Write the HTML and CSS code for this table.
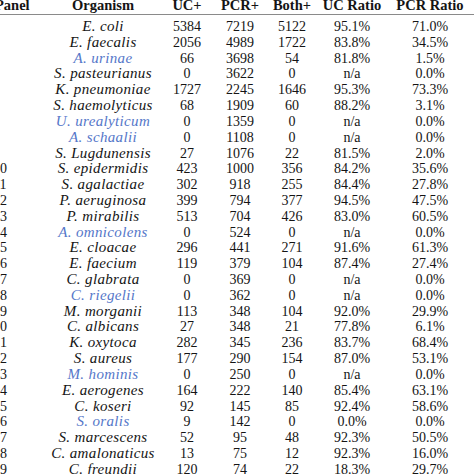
FILE: index.html
```html
<!DOCTYPE html>
<html>
<head>
<meta charset="utf-8">
<link rel="stylesheet" href="styles.css">
</head>
<body>
<div class="table">
  <div class="row head">
    <div class="c panel">Panel</div><div class="c">Organism</div><div class="c">UC+</div><div class="c">PCR+</div><div class="c">Both+</div><div class="c">UC Ratio</div><div class="c">PCR Ratio</div>
  </div>
  <div class="body">
    <div class="row"><div class="c panel">1</div><div class="c org">E. coli</div><div class="c">5384</div><div class="c">7219</div><div class="c">5122</div><div class="c">95.1%</div><div class="c">71.0%</div></div>
    <div class="row"><div class="c panel">2</div><div class="c org">E. faecalis</div><div class="c">2056</div><div class="c">4989</div><div class="c">1722</div><div class="c">83.8%</div><div class="c">34.5%</div></div>
    <div class="row"><div class="c panel">3</div><div class="c org blue">A. urinae</div><div class="c">66</div><div class="c">3698</div><div class="c">54</div><div class="c">81.8%</div><div class="c">1.5%</div></div>
    <div class="row"><div class="c panel">4</div><div class="c org">S. pasteurianus</div><div class="c">0</div><div class="c">3622</div><div class="c">0</div><div class="c">n/a</div><div class="c">0.0%</div></div>
    <div class="row"><div class="c panel">5</div><div class="c org">K. pneumoniae</div><div class="c">1727</div><div class="c">2245</div><div class="c">1646</div><div class="c">95.3%</div><div class="c">73.3%</div></div>
    <div class="row"><div class="c panel">6</div><div class="c org">S. haemolyticus</div><div class="c">68</div><div class="c">1909</div><div class="c">60</div><div class="c">88.2%</div><div class="c">3.1%</div></div>
    <div class="row"><div class="c panel">7</div><div class="c org blue">U. urealyticum</div><div class="c">0</div><div class="c">1359</div><div class="c">0</div><div class="c">n/a</div><div class="c">0.0%</div></div>
    <div class="row"><div class="c panel">8</div><div class="c org blue">A. schaalii</div><div class="c">0</div><div class="c">1108</div><div class="c">0</div><div class="c">n/a</div><div class="c">0.0%</div></div>
    <div class="row"><div class="c panel">9</div><div class="c org">S. Lugdunensis</div><div class="c">27</div><div class="c">1076</div><div class="c">22</div><div class="c">81.5%</div><div class="c">2.0%</div></div>
    <div class="row"><div class="c panel">10</div><div class="c org">S. epidermidis</div><div class="c">423</div><div class="c">1000</div><div class="c">356</div><div class="c">84.2%</div><div class="c">35.6%</div></div>
    <div class="row"><div class="c panel">11</div><div class="c org">S. agalactiae</div><div class="c">302</div><div class="c">918</div><div class="c">255</div><div class="c">84.4%</div><div class="c">27.8%</div></div>
    <div class="row"><div class="c panel">12</div><div class="c org">P. aeruginosa</div><div class="c">399</div><div class="c">794</div><div class="c">377</div><div class="c">94.5%</div><div class="c">47.5%</div></div>
    <div class="row"><div class="c panel">13</div><div class="c org">P. mirabilis</div><div class="c">513</div><div class="c">704</div><div class="c">426</div><div class="c">83.0%</div><div class="c">60.5%</div></div>
    <div class="row"><div class="c panel">14</div><div class="c org blue">A. omnicolens</div><div class="c">0</div><div class="c">524</div><div class="c">0</div><div class="c">n/a</div><div class="c">0.0%</div></div>
    <div class="row"><div class="c panel">15</div><div class="c org">E. cloacae</div><div class="c">296</div><div class="c">441</div><div class="c">271</div><div class="c">91.6%</div><div class="c">61.3%</div></div>
    <div class="row"><div class="c panel">16</div><div class="c org">E. faecium</div><div class="c">119</div><div class="c">379</div><div class="c">104</div><div class="c">87.4%</div><div class="c">27.4%</div></div>
    <div class="row"><div class="c panel">17</div><div class="c org">C. glabrata</div><div class="c">0</div><div class="c">369</div><div class="c">0</div><div class="c">n/a</div><div class="c">0.0%</div></div>
    <div class="row"><div class="c panel">18</div><div class="c org blue">C. riegelii</div><div class="c">0</div><div class="c">362</div><div class="c">0</div><div class="c">n/a</div><div class="c">0.0%</div></div>
    <div class="row"><div class="c panel">19</div><div class="c org">M. morganii</div><div class="c">113</div><div class="c">348</div><div class="c">104</div><div class="c">92.0%</div><div class="c">29.9%</div></div>
    <div class="row"><div class="c panel">20</div><div class="c org">C. albicans</div><div class="c">27</div><div class="c">348</div><div class="c">21</div><div class="c">77.8%</div><div class="c">6.1%</div></div>
    <div class="row"><div class="c panel">21</div><div class="c org">K. oxytoca</div><div class="c">282</div><div class="c">345</div><div class="c">236</div><div class="c">83.7%</div><div class="c">68.4%</div></div>
    <div class="row"><div class="c panel">22</div><div class="c org">S. aureus</div><div class="c">177</div><div class="c">290</div><div class="c">154</div><div class="c">87.0%</div><div class="c">53.1%</div></div>
    <div class="row"><div class="c panel">23</div><div class="c org blue">M. hominis</div><div class="c">0</div><div class="c">250</div><div class="c">0</div><div class="c">n/a</div><div class="c">0.0%</div></div>
    <div class="row"><div class="c panel">24</div><div class="c org">E. aerogenes</div><div class="c">164</div><div class="c">222</div><div class="c">140</div><div class="c">85.4%</div><div class="c">63.1%</div></div>
    <div class="row"><div class="c panel">25</div><div class="c org">C. koseri</div><div class="c">92</div><div class="c">145</div><div class="c">85</div><div class="c">92.4%</div><div class="c">58.6%</div></div>
    <div class="row"><div class="c panel">26</div><div class="c org blue">S. oralis</div><div class="c">9</div><div class="c">142</div><div class="c">0</div><div class="c">0.0%</div><div class="c">0.0%</div></div>
    <div class="row"><div class="c panel">27</div><div class="c org">S. marcescens</div><div class="c">52</div><div class="c">95</div><div class="c">48</div><div class="c">92.3%</div><div class="c">50.5%</div></div>
    <div class="row"><div class="c panel">28</div><div class="c org">C. amalonaticus</div><div class="c">13</div><div class="c">75</div><div class="c">12</div><div class="c">92.3%</div><div class="c">16.0%</div></div>
    <div class="row"><div class="c panel">29</div><div class="c org">C. freundii</div><div class="c">120</div><div class="c">74</div><div class="c">22</div><div class="c">18.3%</div><div class="c">29.7%</div></div>
  </div>
</div>
</body>
</html>
```
FILE: styles.css
```css
html, body {
  margin: 0;
  padding: 0;
  overflow: hidden;
  background: #ffffff;
}
.table {
  margin-left: -20px;
  width: 499px;
  font-family: "Liberation Serif", "Times New Roman", serif;
  font-size: 14px;
  color: #141414;
}
.row {
  display: grid;
  grid-template-columns: 71px 104px 64px 42px 62px 58px 98px;
  height: 15.82px;
  line-height: 15.82px;
}
.c {
  justify-self: center;
  white-space: nowrap;
}
.c.panel {
  justify-self: start;
  padding-left: 13px;
}
.head {
  font-weight: bold;
  font-size: 14.5px;
  height: 16px;
  line-height: 14px;
  margin-top: -2px;
  border-bottom: 1px solid #8a8a8a;
}
.head .c.panel {
  padding-left: 15px;
}
.body {
  padding-top: 4px;
}
.org {
  font-style: italic;
  font-size: 15px;
  letter-spacing: 0.35px;
}
.blue {
  color: #5577c9;
}
```
